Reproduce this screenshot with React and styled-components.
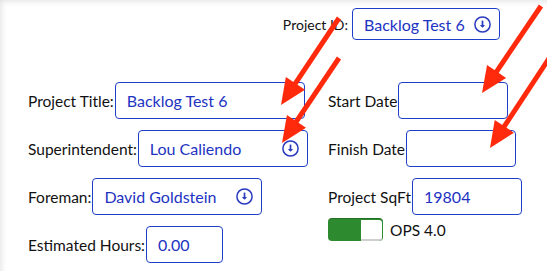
import React from 'react';
import styled, { createGlobalStyle } from 'styled-components';

const GlobalStyle = createGlobalStyle`
  html, body {
    margin: 0;
    padding: 0;
    background: #fff;
  }
  body {
    font-family: Lato, "Noto Sans", sans-serif;
  }
`

const Page = styled.div`
  position: relative;
  width: 547px;
  height: 271px;
  overflow: hidden;
  box-shadow: inset 5px 5px 6px -4px rgba(0, 0, 0, 0.12);
  box-sizing: border-box;
`

const Header = styled.div`
  display: flex;
  justify-content: flex-end;
  padding: 8px 47px 0 0;
  height: 82px;
  box-sizing: border-box;
`

const Columns = styled.div`
  display: grid;
  grid-template-columns: 300px 1fr;
  padding-left: 28px;
`

const Column = styled.div`
  display: flex;
  flex-direction: column;
  gap: 11px;
`

const Field = styled.div`
  display: flex;
  align-items: center;
  height: ${p => p.$h || 37}px;
`

const Label = styled.label`
  font-size: ${p => p.$size || 15.5}px;
  color: #111;
  margin-right: ${p => p.$gap ?? 1}px;
  white-space: nowrap;
`

const Box = styled.div`
  box-sizing: border-box;
  width: ${p => p.$w}px;
  height: ${p => p.$h || 37}px;
  border: 1px solid #1e3fc8;
  border-radius: 4px;
  display: flex;
  align-items: center;
  justify-content: space-between;
  padding: 0 8px 0 11px;
  font-size: 16px;
  color: #2233c2;
`

const ToggleRow = styled.div`
  display: flex;
  align-items: center;
  margin-top: -8px;
  gap: 7px;
  font-size: 15.5px;
  color: #111;
`

const Switch = styled.div`
  box-sizing: border-box;
  width: 55px;
  height: 23px;
  border-radius: 4px;
  background: #2e8a2e;
  border-top: 1px solid #256f25;
  display: flex;
  justify-content: flex-end;
  padding: 1px;
`

const Knob = styled.div`
  width: 21px;
  height: 19px;
  background: #fff;
  border-radius: 0 3px 3px 0;
  border-bottom: 2px solid #cfcfcf;
`

const Overlay = styled.svg`
  position: absolute;
  left: 0;
  top: 0;
  pointer-events: none;
`

const DropIcon = () => (
  <svg width="17" height="17" viewBox="0 0 17 17">
    <circle cx="8.5" cy="8.5" r="7.6" fill="none" stroke="#2a3bbf" strokeWidth="1.5" />
    <path d="M8.5 4.6 V11" stroke="#2a3bbf" strokeWidth="1.7" />
    <path d="M5.9 9 L8.5 11.8 L11.1 9 Z" fill="#2a3bbf" />
  </svg>
);

const arrows = [
  [339, 18, 281, 105],
  [339, 58, 282, 143],
  [541, 6, 482, 93],
  [552, 54, 490, 148],
];

function arrowPoints(x1, y1, x2, y2) {
  const dx = x2 - x1, dy = y2 - y1;
  const len = Math.hypot(dx, dy);
  const ux = dx / len, uy = dy / len;
  const px = -uy, py = ux;
  const hl = 26, hw = 11.5;
  const bx = x2 - ux * hl, by = y2 - uy * hl;
  return {
    line: [x1, y1, bx + ux * 4, by + uy * 4],
    head: `${x2},${y2} ${bx + px * hw},${by + py * hw} ${bx - px * hw},${by - py * hw}`,
  };
}

const Arrows = () => (
  <Overlay width="547" height="271">
    {arrows.map((a, i) => {
      const { line, head } = arrowPoints(...a);
      return (
        <g key={i}>
          <line x1={line[0]} y1={line[1]} x2={line[2]} y2={line[3]} stroke="#ff2a0c" strokeWidth="5" />
          <polygon points={head} fill="#ff2a0c" />
        </g>
      );
    })}
  </Overlay>
);

export default function App() {
  return (
    <>
      <GlobalStyle />
      <Page>
        <Header>
          <Field $h={32}>
            <Label $size={14} $gap={4}>Project ID:</Label>
            <Box $w={148} $h={32}>Backlog Test 6<DropIcon /></Box>
          </Field>
        </Header>
        <Columns>
          <Column>
            <Field>
              <Label>Project Title:</Label>
              <Box $w={190}>Backlog Test 6</Box>
            </Field>
            <Field>
              <Label>Superintendent:</Label>
              <Box $w={170}>Lou Caliendo<DropIcon /></Box>
            </Field>
            <Field>
              <Label>Foreman:</Label>
              <Box $w={170}>David Goldstein<DropIcon /></Box>
            </Field>
            <Field>
              <Label>Estimated Hours:</Label>
              <Box $w={77}>0.00</Box>
            </Field>
          </Column>
          <Column>
            <Field>
              <Label>Start Date</Label>
              <Box $w={110} />
            </Field>
            <Field>
              <Label>Finish Date</Label>
              <Box $w={110} />
            </Field>
            <Field>
              <Label>Project SqFt</Label>
              <Box $w={110}>19804</Box>
            </Field>
            <ToggleRow>
              <Switch><Knob /></Switch>
              OPS 4.0
            </ToggleRow>
          </Column>
        </Columns>
        <Arrows />
      </Page>
    </>
  );
}
